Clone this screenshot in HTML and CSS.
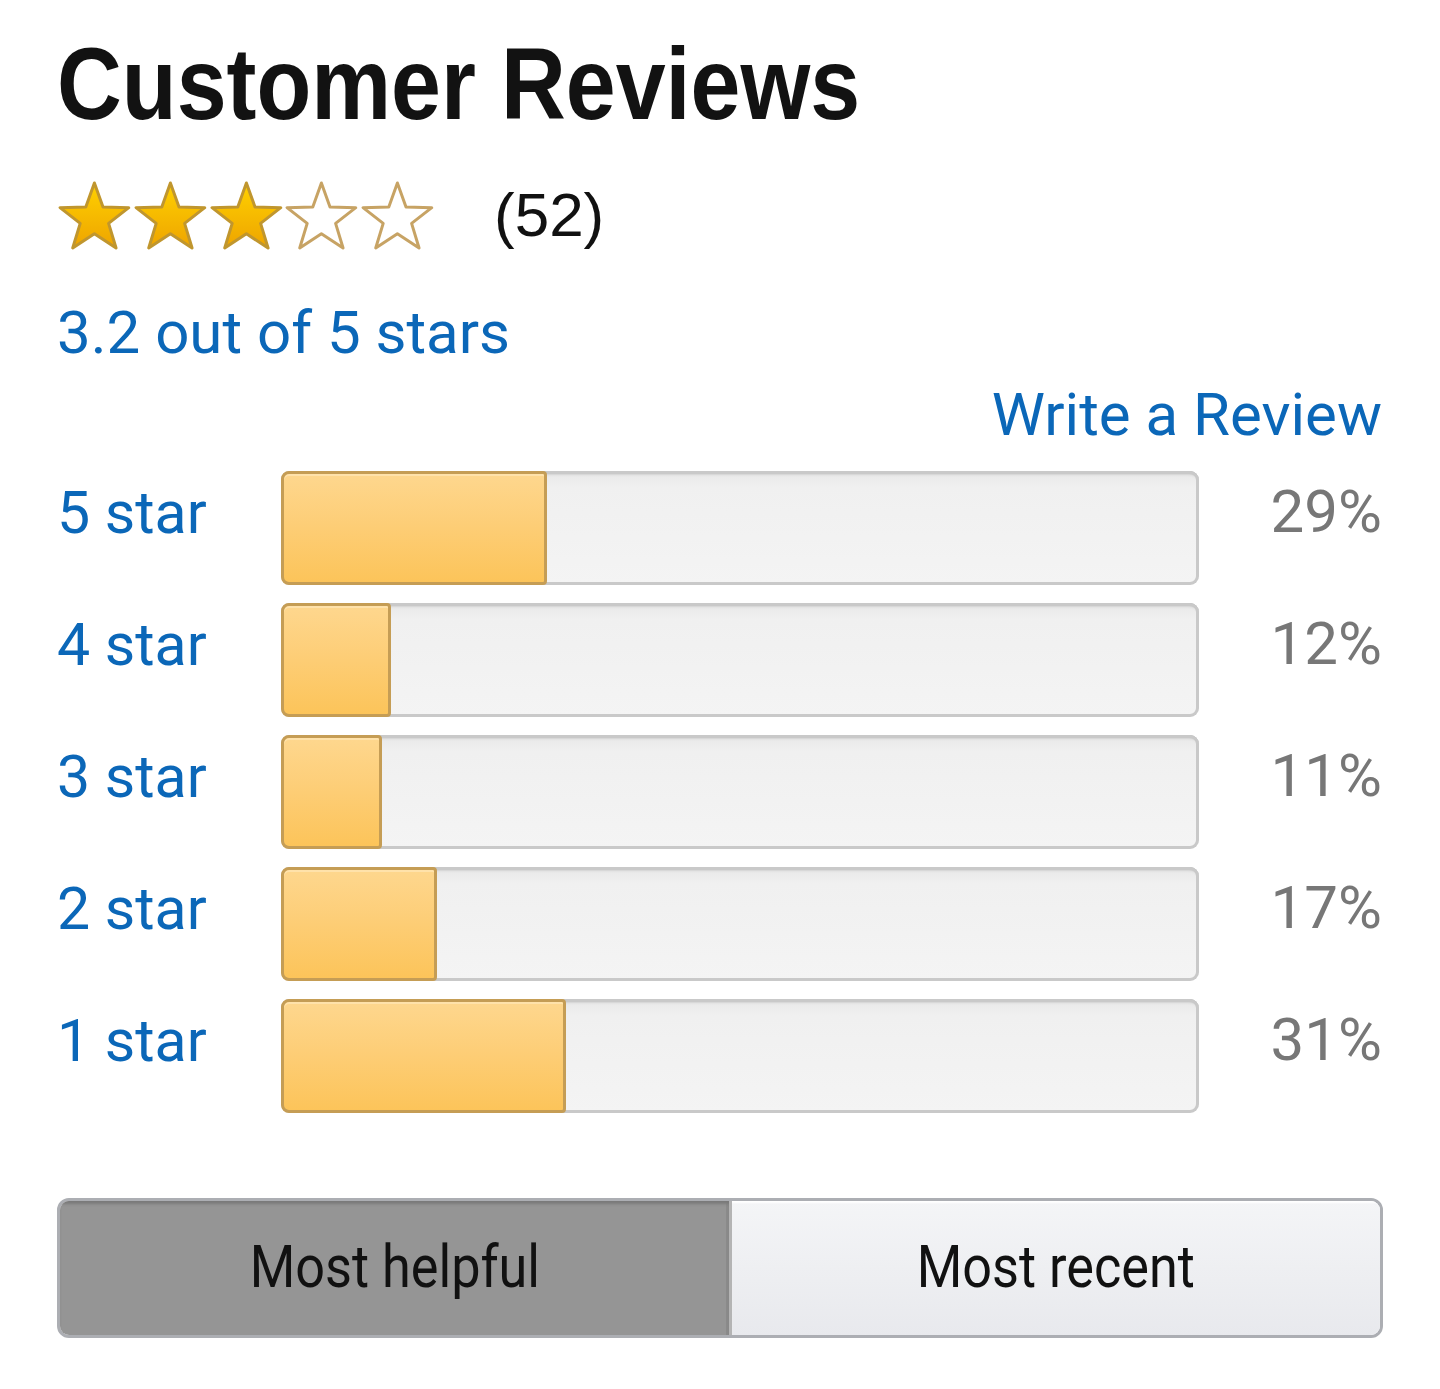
FILE: index.html
```html
<!DOCTYPE html>
<html>
<head>
<meta charset="utf-8">
<link rel="stylesheet" href="styles.css">
</head>
<body>
<div class="page">
  <h1 class="title"><span class="title-text">Customer Reviews</span></h1>
  <div class="rating-row">
    <div class="stars">
      <svg class="star" viewBox="0 0 100 95"><defs><linearGradient id="g" x1="0" y1="0" x2="0" y2="1"><stop offset="0" stop-color="#ffd100"/><stop offset="1" stop-color="#eea400"/></linearGradient></defs><polygon points="50,4 61.5,36 96,37 69,58 79,91 50,72 21,91 31,58 4,37 38.5,36" fill="url(#g)" stroke="#c0962e" stroke-width="4" stroke-linejoin="round"/></svg>
      <svg class="star" viewBox="0 0 100 95"><polygon points="50,4 61.5,36 96,37 69,58 79,91 50,72 21,91 31,58 4,37 38.5,36" fill="url(#g)" stroke="#c0962e" stroke-width="4" stroke-linejoin="round"/></svg>
      <svg class="star" viewBox="0 0 100 95"><polygon points="50,4 61.5,36 96,37 69,58 79,91 50,72 21,91 31,58 4,37 38.5,36" fill="url(#g)" stroke="#c0962e" stroke-width="4" stroke-linejoin="round"/></svg>
      <svg class="star" viewBox="0 0 100 95"><polygon points="50,4 61.5,36 96,37 69,58 79,91 50,72 21,91 31,58 4,37 38.5,36" fill="#fff" stroke="#c7a364" stroke-width="4" stroke-linejoin="round"/></svg>
      <svg class="star" viewBox="0 0 100 95"><polygon points="50,4 61.5,36 96,37 69,58 79,91 50,72 21,91 31,58 4,37 38.5,36" fill="#fff" stroke="#c7a364" stroke-width="4" stroke-linejoin="round"/></svg>
    </div>
    <span class="count">(52)</span>
  </div>
  <div class="average">3.2 out of 5 stars</div>
  <div class="write"><span>Write a Review</span></div>
  <div class="bars">
    <div class="bar-row"><span class="label">5 star</span><div class="track"><div class="fill" style="width:29%"></div></div><span class="pct">29%</span></div>
    <div class="bar-row"><span class="label">4 star</span><div class="track"><div class="fill" style="width:12%"></div></div><span class="pct">12%</span></div>
    <div class="bar-row"><span class="label">3 star</span><div class="track"><div class="fill" style="width:11%"></div></div><span class="pct">11%</span></div>
    <div class="bar-row"><span class="label">2 star</span><div class="track"><div class="fill" style="width:17%"></div></div><span class="pct">17%</span></div>
    <div class="bar-row"><span class="label">1 star</span><div class="track"><div class="fill" style="width:31%"></div></div><span class="pct">31%</span></div>
  </div>
  <div class="sort">
    <div class="sort-btn active"><span class="btn-text">Most helpful</span></div>
    <div class="sort-btn"><span class="btn-text">Most recent</span></div>
  </div>
</div>
</body>
</html>
```
FILE: styles.css
```css
* { box-sizing: border-box; }
html, body { margin: 0; padding: 0; background: #fff; }
body { font-family: Roboto, "Noto Sans", sans-serif; }
.page {
  width: 1440px;
  padding: 28px 57px 0 57px;
}
.title {
  margin: 0;
  height: 112px;
  font-family: "Liberation Sans", Arial, sans-serif;
  font-weight: 700;
  font-size: 102px;
  line-height: 112px;
  color: #121212;
  white-space: nowrap;
}
.title-text {
  display: inline-block;
  transform: scaleX(0.88);
  transform-origin: left center;
}
.rating-row {
  display: flex;
  align-items: center;
  height: 74px;
  margin-top: 38px;
}
.stars {
  display: flex;
  gap: 1px;
  width: 378px;
}
.star {
  width: 75px;
  height: 71px;
  display: block;
}
.count {
  margin-left: 59px;
  font-family: "Liberation Sans", Arial, sans-serif;
  font-size: 62px;
  color: #111;
  line-height: 74px;
}
.average {
  margin-top: 46px;
  font-size: 60px;
  line-height: 70px;
  color: #0b67b8;
}
.write {
  display: flex;
  justify-content: flex-end;
  margin-top: 12px;
  font-size: 60px;
  line-height: 70px;
  color: #0b67b8;
  padding-right: 1px;
}
.bars {
  display: flex;
  flex-direction: column;
  gap: 18px;
  margin-top: 21px;
}
.bar-row {
  display: flex;
  align-items: flex-start;
  height: 114px;
}
.label {
  width: 224px;
  padding-top: 2px;
  font-size: 59px;
  line-height: 80px;
  color: #0b67b8;
}
.track {
  width: 918px;
  height: 114px;
  border-radius: 9px;
  background: linear-gradient(#e8e8e8, #f0f0f0 15%, #f4f4f4);
  box-shadow: inset 0 0 0 3px #c9c9c9, inset 0 5px 3px -2px #b9b9b9;
  display: flex;
}
.fill {
  height: 100%;
  border: 3px solid #c59d55;
  border-radius: 8px 4px 4px 8px;
  background: linear-gradient(#fed78e, #fdcd75 50%, #fcc45a);
  box-shadow: inset 0 2px 0 #ffe2aa;
}
.pct {
  flex: 1;
  text-align: right;
  padding-top: 1px;
  font-size: 60px;
  line-height: 80px;
  color: #777;
  padding-right: 1px;
}
.sort {
  display: flex;
  margin-top: 85px;
  width: 1326px;
  height: 140px;
  border: 3px solid #acaeb3;
  border-radius: 12px;
  overflow: hidden;
}
.sort-btn {
  flex: 1;
  display: flex;
  align-items: center;
  justify-content: center;
  padding-bottom: 4px;
  font-size: 60px;
  color: #111;
  background: linear-gradient(#f4f5f7, #e8e9ed);
  box-shadow: inset 0 3px 2px -1px #fff;
}
.sort-btn.active {
  flex: 0 0 672px;
  background: #959595;
  box-shadow: inset 0 4px 3px -1px #7a7a7a, inset -3px 0 0 #8a8a8a;
  border-right: 3px solid #b4b4b4;
}
.btn-text {
  display: inline-block;
  transform: scaleX(0.87);
  white-space: nowrap;
}
```
